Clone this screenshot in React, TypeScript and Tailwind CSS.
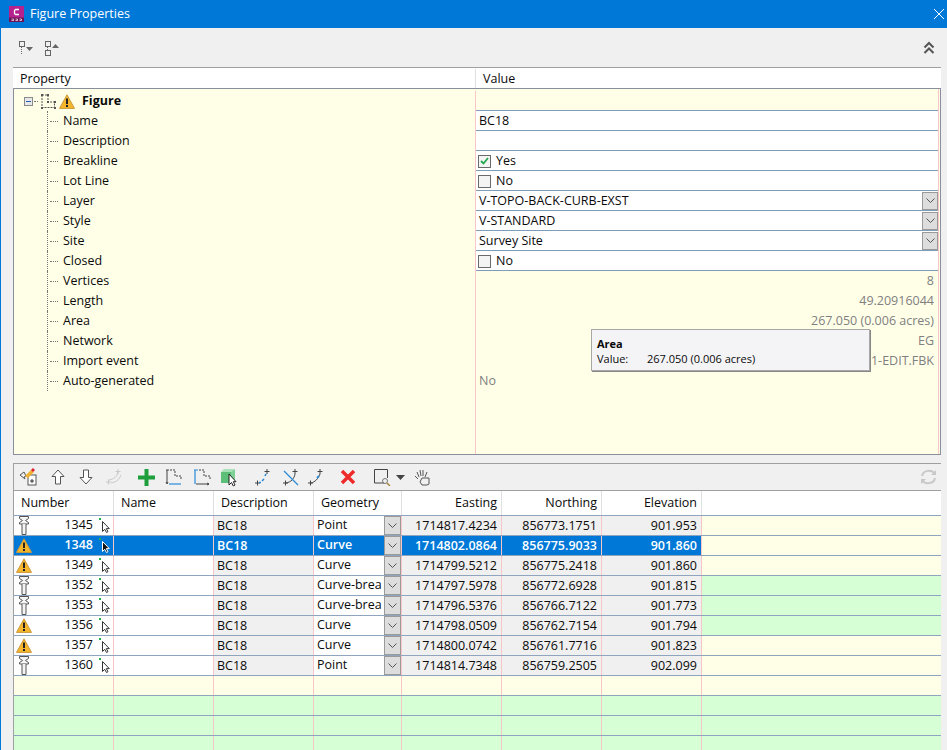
import * as React from "react";

const font = "font-['Open_Sans',sans-serif]";

function Warning({ className = "" }: { className?: string }) {
  return (
    <svg width="16" height="15" viewBox="0 0 16 15" className={className}>
      <path d="M8 .8 15.500 14.400H.5Z" fill="#f5b52c" stroke="#c99a3a" strokeWidth="1" strokeLinejoin="round" />
      <rect x="7" y="4.500" width="2" height="5.500" fill="#222" />
      <rect x="7" y="11" width="2" height="2" fill="#222" />
    </svg>
  );
}

function Pin() {
  return (
    <svg width="12" height="19" viewBox="0 0 12 19" fill="#f4f4f4" stroke="#555">
      <path d="M1.500.5h9v2l-3 2 3 2v1.500h-9V6.500l3-2-3-2Z" />
      <path d="M4 8v10.500h4V8" />
    </svg>
  );
}

function Cursor({ selected }: { selected?: boolean }) {
  return (
    <svg width="12" height="16" viewBox="0 0 12 16">
      <rect x="0" y="0" width="2" height="2" fill="#22b14c" />
      <path d="M3.500 3.500v10l2.200-2.200 1.800 3.200 1.500-.8-1.700-3.100h3Z" fill={selected ? "#111" : "#fff"} stroke={selected ? "#fff" : "#333"} strokeWidth="1" />
    </svg>
  );
}

function Caret() {
  return (
    <svg width="9" height="5" viewBox="0 0 9 5" fill="none" stroke="#555" strokeWidth="1">
      <path d="M.5.5 4.500 4.500 8.500.5" />
    </svg>
  );
}

function ComboButton({ className = "" }: { className?: string }) {
  return (
    <div className={`flex h-full shrink-0 items-center justify-center border border-[#9a9a9a] bg-[#dddddd] ${className}`}>
      <Caret />
    </div>
  );
}

function Checkbox({ checked }: { checked?: boolean }) {
  return (
    <span className="flex h-[13px] w-[13px] items-center justify-center border border-[#6a6a6a] bg-[#f4f4f4]">
      {checked && (
        <svg width="9" height="8" viewBox="0 0 9 8" fill="none" stroke="#22a94f" strokeWidth="1.800">
          <path d="M1 4 3.500 6.500 8 1" />
        </svg>
      )}
    </span>
  );
}

type Prop = { name: string; kind: "blank" | "text" | "check" | "combo" | "ro"; value?: string; checked?: boolean };

const props: Prop[] = [
  { name: "Name", kind: "text", value: "BC18" },
  { name: "Description", kind: "blank" },
  { name: "Breakline", kind: "check", value: "Yes", checked: true },
  { name: "Lot Line", kind: "check", value: "No" },
  { name: "Layer", kind: "combo", value: "V-TOPO-BACK-CURB-EXST" },
  { name: "Style", kind: "combo", value: "V-STANDARD" },
  { name: "Site", kind: "combo", value: "Survey Site" },
  { name: "Closed", kind: "check", value: "No" },
  { name: "Vertices", kind: "ro", value: "8" },
  { name: "Length", kind: "ro", value: "49.20916044" },
  { name: "Area", kind: "ro", value: "267.050 (0.006 acres)" },
  { name: "Network", kind: "ro", value: "EG" },
  { name: "Import event", kind: "ro", value: "1-EDIT.FBK" },
];

function PropValue({ p }: { p: Prop }) {
  if (p.kind === "ro") {
    return <div className="flex h-5 items-center justify-end pr-[4px] text-[#808080]">{p.value}</div>;
  }
  return (
    <div className="flex h-5 items-center border-b border-[#7f9db9] bg-white pl-[3px] pt-px">
      {p.kind === "check" && (
        <span className="-ml-[1px] flex items-center gap-[5px]">
          <Checkbox checked={p.checked} />
          {p.value}
        </span>
      )}
      {p.kind === "text" && p.value}
      {p.kind === "combo" && (
        <>
          <span className="flex-1">{p.value}</span>
          <ComboButton className="-mt-px w-4" />
        </>
      )}
    </div>
  );
}

function PropertyGrid() {
  return (
    <div className="relative ml-[12px] h-[388px] w-[928px] border-t border-[#a0a0a0]">
      <div className="flex h-5 bg-white pt-px">
        <div className="w-[463px] border-r border-[#e0e0e0] pl-[7px] leading-5">Property</div>
        <div className="flex-1 pl-[7px] leading-5">Value</div>
      </div>
      <div className="flex h-[367px] border border-[#8a8f9c] bg-[#ffffe8] pt-[2px]">
        <div className="w-[462px] shrink-0 border-r border-[#f7c6c6]">
          <div className="flex h-5 items-center pl-[10px]">
            <span className="flex h-[9px] w-[9px] items-center justify-center border border-[#8a8a8a] bg-[#e8e8e8]">
              <span className="h-px w-[5px] bg-[#2a5db0]" />
            </span>
            <span className="ml-[1px] w-[4px] border-t border-dotted border-[#777]" />
            <svg width="15" height="15" viewBox="0 0 15 15" fill="none" stroke="#555" className="ml-[3px]">
              <path strokeDasharray="2 1" d="M1 1h6v7h6.500M1 1v12.500h12.500V8" />
              <path d="M0 0h2v2H0ZM6 0h2v2H6ZM6 7h2v2H6ZM13 7h2v2h-2ZM0 13h2v2H0ZM13 13h2v2h-2Z" fill="#555" stroke="none" />
            </svg>
            <Warning className="ml-[3px]" />
            <span className="ml-[7px] font-bold">Figure</span>
          </div>
          {[...props, { name: "Auto-generated", kind: "ro" as const }].map((p) => (
            <div key={p.name} className="flex h-5 items-center pl-[33px]">
              <span className="h-5 border-l border-dotted border-[#777]" />
              <span className="ml-[2px] w-[8px] border-t border-dotted border-[#777]" />
              <span className="ml-[5px]">{p.name}</span>
            </div>
          ))}
        </div>
        <div className="mr-[1px] flex-1 -mt-[2px] border-r border-[#f7c6c6] pt-[2px]">
          <div className="h-5 border-b border-[#7f9db9]" />
          {props.map((p) => (
            <PropValue key={p.name} p={p} />
          ))}
          <div className="flex h-5 items-center pl-[3px] text-[#808080]">No</div>
        </div>
      </div>
      <div className="absolute left-[578px] top-[261px] h-[42px] w-[279px] border border-[#a8a8a8] bg-[#f4f4f6] pl-[5px] pt-[6px] text-[11px] leading-[15px] shadow-[1px_1px_0_#888]">
        <div className="font-bold">Area</div>
        <div className="flex">
          <span className="w-[50px]">Value:</span>
          <span>267.050 (0.006 acres)</span>
        </div>
      </div>
    </div>
  );
}

type Row = { num: string; warn: boolean; geo: string; e: string; n: string; z: string; tail: string; sel?: boolean };

const Y = "bg-[#ffffe8]";
const G = "bg-[#d6ffd6]";

const rows: Row[] = [
  { num: "1345", warn: false, geo: "Point", e: "1714817.4234", n: "856773.1751", z: "901.953", tail: Y },
  { num: "1348", warn: true, geo: "Curve", e: "1714802.0864", n: "856775.9033", z: "901.860", tail: Y, sel: true },
  { num: "1349", warn: true, geo: "Curve", e: "1714799.5212", n: "856775.2418", z: "901.860", tail: Y },
  { num: "1352", warn: false, geo: "Curve-break", e: "1714797.5978", n: "856772.6928", z: "901.815", tail: G },
  { num: "1353", warn: false, geo: "Curve-break", e: "1714796.5376", n: "856766.7122", z: "901.773", tail: G },
  { num: "1356", warn: true, geo: "Curve", e: "1714798.0509", n: "856762.7154", z: "901.794", tail: G },
  { num: "1357", warn: true, geo: "Curve", e: "1714800.0742", n: "856761.7716", z: "901.823", tail: Y },
  { num: "1360", warn: false, geo: "Point", e: "1714814.7348", n: "856759.2505", z: "902.099", tail: Y },
];

function DataRow({ r }: { r: Row }) {
  const plain = r.sel ? "bg-[#0078d7] text-white font-semibold" : "bg-white";
  const gray = r.sel ? "bg-[#0078d7] text-white font-semibold" : "bg-[#f0f0f0]";
  const num = `w-[100px] border-r border-[#f7c6c6] pr-[4px] text-right leading-[19px] ${gray}`;
  return (
    <div className="flex h-5 border-b border-[#8fa5bf]">
      <div className={`flex w-[100px] items-center border-r border-[#f7c6c6] pl-[1px] ${plain}`}>
        <span className="flex w-[18px] justify-center">{r.warn ? <Warning /> : <Pin />}</span>
        <span className="w-[60px] text-right">{r.num}</span>
        <span className="ml-[6px]">
          <Cursor selected={r.sel} />
        </span>
      </div>
      <div className={`w-[100px] border-r border-[#f7c6c6] ${plain}`} />
      <div className={`w-[100px] border-r border-[#f7c6c6] pl-[3px] leading-[19px] ${gray}`}>BC18</div>
      <div className={`flex w-[88px] items-center border-r border-[#f7c6c6] ${plain}`}>
        <span className="w-[68px] overflow-hidden whitespace-nowrap pl-[3px]">{r.geo}</span>
        <ComboButton className="ml-auto w-[17px]" />
      </div>
      <div className={num}>{r.e}</div>
      <div className={num}>{r.n}</div>
      <div className={num}>{r.z}</div>
      <div className={`flex-1 ${r.tail}`} />
    </div>
  );
}

function EmptyRow({ tail }: { tail: string }) {
  const widths = ["w-[100px]", "w-[100px]", "w-[100px]", "w-[88px]", "w-[100px]", "w-[100px]", "w-[100px]"];
  return (
    <div className={`flex h-5 border-b border-[#8fa5bf] ${tail}`}>
      {widths.map((w, i) => (
        <div key={i} className={`${w} border-r border-[#f7c6c6]`} />
      ))}
    </div>
  );
}

function ToolBtn({ x, children }: { x: string; children: React.ReactNode }) {
  return <span className={`flex w-[30px] shrink-0 justify-center ${x}`}>{children}</span>;
}

function GridToolbar() {
  return (
    <div className="flex h-[27px] items-center border-b border-[#a0a0a0]">
      <ToolBtn x="">
        <svg width="20" height="20" viewBox="0 0 20 20" fill="none">
          <path d="M1 8l4-3 1 2 1 2-2 1 1 2Z" stroke="#555" />
          <rect x="9" y="8" width="8" height="10" fill="#fff" stroke="#555" />
          <path d="M11 14h4M13 12v4" stroke="#333" />
          <path d="M6 9l6-6 3 2-6 6Z" fill="#f0b030" />
          <path d="M12 3l2-2 2 2-2 2Z" fill="#e02030" />
        </svg>
      </ToolBtn>
      <ToolBtn x="-ml-[1px]">
        <svg width="14" height="16" viewBox="0 0 14 16" fill="#fff" stroke="#555">
          <path d="M7 1 13 7.500H9.500V15h-5V7.500H1Z" />
        </svg>
      </ToolBtn>
      <ToolBtn x="-ml-[2px]">
        <svg width="14" height="16" viewBox="0 0 14 16" fill="#fff" stroke="#555">
          <path d="M7 15 13 8.500H9.500V1h-5V8.500H1Z" />
        </svg>
      </ToolBtn>
      <ToolBtn x="-ml-[2px]">
        <svg width="18" height="18" viewBox="0 0 18 18" fill="none" stroke="#c8c8c8">
          <path d="M1 14h5M3.500 11.500v5M13 1v5M10.500 3.500h5M4 12c5-1 8-3 9-8M6 15c5-1 8-3 10-8" />
        </svg>
      </ToolBtn>
      <ToolBtn x="ml-[2px]">
        <svg width="17" height="17" viewBox="0 0 17 17">
          <path d="M6.500 0h4v6.500H17v4h-6.500V17h-4v-6.500H0v-4h6.500Z" fill="#1f9e3c" />
        </svg>
      </ToolBtn>
      <ToolBtn x="-ml-[2px]">
        <svg width="18" height="18" viewBox="0 0 18 18" fill="none" stroke="#444">
          <path strokeDasharray="2 1" d="M5 2h5v6h6v4" />
          <path d="M2 2v13M1 2h3M1 14l1 2 1-2" />
          <path d="M4 16h12" stroke="#2a8ad8" strokeWidth="1.200" />
        </svg>
      </ToolBtn>
      <ToolBtn x="-ml-[2px]">
        <svg width="18" height="18" viewBox="0 0 18 18" fill="none" stroke="#444">
          <path strokeDasharray="2 1" d="M6 2h5v6h6v4" />
          <path d="M2 2v14" stroke="#2a8ad8" strokeWidth="1.200" />
          <path d="M1 2h4" stroke="#2a8ad8" />
          <path d="M3 16h13M14 15l2 1-2 1" />
        </svg>
      </ToolBtn>
      <ToolBtn x="-ml-[4px]">
        <svg width="20" height="20" viewBox="0 0 20 20">
          <path d="M3 5 6 2h11l-4 3Z" fill="#a8e0b8" />
          <path d="M13 5l4-3v11l-4 3Z" fill="#7fd096" />
          <path d="M3 5h10v11H3Z" fill="#5cbf78" />
          <path d="M11 7v11l2.500-2.500 1.800 3.500 1.700-1-1.700-3.300H18Z" fill="#fff" stroke="#222" />
        </svg>
      </ToolBtn>
      <ToolBtn x="ml-[5px]">
        <svg width="18" height="18" viewBox="0 0 18 18" fill="none" stroke="#444">
          <path d="M1 15h5M3.500 12.500v5M13 1v5M10.500 3.500h5" />
          <path d="M5 14.500h2" stroke="#2a8ad8" strokeWidth="1.500" />
          <path d="M8 13l2-2M11 8l1-2" stroke="#2a8ad8" strokeWidth="1.600" />
        </svg>
      </ToolBtn>
      <ToolBtn x="-ml-[2px]">
        <svg width="18" height="18" viewBox="0 0 18 18" fill="none" stroke="#444">
          <path d="M1 15h5M3.500 12.500v5M13 1v5M10.500 3.500h5M4 15c5-1 8-4 9-9" />
          <path d="M2 3l14 14" stroke="#2a8ad8" strokeWidth="1.200" />
        </svg>
      </ToolBtn>
      <ToolBtn x="-ml-[5px]">
        <svg width="18" height="18" viewBox="0 0 18 18" fill="none" stroke="#444">
          <path d="M1 15h5M3.500 12.500v5M13 1v5M10.500 3.500h5M4 15c4-1 7-4 9-9" />
          <path d="M10 10l2-2" stroke="#2a8ad8" strokeWidth="1.800" />
        </svg>
      </ToolBtn>
      <ToolBtn x="ml-[2px]">
        <svg width="16" height="16" viewBox="0 0 16 16" stroke="#ee2b2b" strokeWidth="3.500">
          <path d="M2 2l12 12M14 2 2 14" />
        </svg>
      </ToolBtn>
      <span className="ml-[3px] flex w-[34px] shrink-0 items-center justify-center">
        <svg width="20" height="18" viewBox="0 0 20 18" fill="none">
          <path d="M11 15H1.500V1.500h13V10" stroke="#444" />
          <circle cx="12" cy="13" r="2.500" stroke="#777" />
          <path d="M14 15l3 3" stroke="#a8873c" strokeWidth="1.500" />
        </svg>
      </span>
      <svg width="9" height="5" viewBox="0 0 9 5" className="-ml-[4px]">
        <path d="M0 0h9L4.500 5Z" fill="#444" />
      </svg>
      <span className="ml-[9px]">
        <svg width="17" height="18" viewBox="0 0 17 18" fill="none" stroke="#555">
          <path d="M4 11 1 8M5 9 3 4M7 8 6 2M9 8V2M11 9l2-5M8 10h7v6l-2 1H8l-2-3Z" />
        </svg>
      </span>
      <span className="ml-auto mr-[4px]">
        <svg width="17" height="16" viewBox="0 0 17 16" fill="none" stroke="#c8c8c8" strokeWidth="2">
          <path d="M2 7c1-6 10-7 13-2M15 9c-1 6-10 7-13 2" />
          <path d="M16 1v5h-5ZM1 15v-5h5Z" fill="#c8c8c8" stroke="none" />
        </svg>
      </span>
    </div>
  );
}

function DataGrid() {
  const head: [string, string, string][] = [
    ["Number", "w-[100px]", "pl-[7px]"],
    ["Name", "w-[100px]", "pl-[7px]"],
    ["Description", "w-[100px]", "pl-[7px]"],
    ["Geometry", "w-[88px]", "pl-[7px]"],
    ["Easting", "w-[100px]", "justify-end pr-[4px]"],
    ["Northing", "w-[100px]", "justify-end pr-[4px]"],
    ["Elevation", "w-[100px]", "justify-end pr-[4px]"],
  ];
  return (
    <div className="ml-[12px] mt-[8px] w-[928px] border-l border-t border-[#a0a0a0]">
      <GridToolbar />
      <div className="flex h-[25px] border-b border-[#8fa5bf] bg-white">
        {head.map(([t, w, x]) => (
          <div key={t} className={`flex items-center border-r border-[#e0e0e0] ${w} ${x}`}>
            {t}
          </div>
        ))}
      </div>
      {rows.map((r) => (
        <DataRow key={r.num} r={r} />
      ))}
      <EmptyRow tail={Y} />
      <EmptyRow tail={G} />
      <EmptyRow tail={G} />
      <EmptyRow tail={G} />
    </div>
  );
}

export default function App() {
  return (
    <div className={`${font} h-[750px] w-[947px] overflow-hidden border-l border-[#0078d7] bg-[#f0f0f0] text-[12.5px] text-[#0a0a0a]`}>
      <div className="-ml-[1px] flex h-[28px] items-center bg-[#0078d7] pl-[9px] text-[12.5px] text-white">
        <svg width="15" height="16" viewBox="0 0 15 16" className="shrink-0">
          <rect width="15" height="16" fill="#b5228e" />
          <rect y="11.500" width="15" height="4.500" fill="#6e1258" />
          <path d="M10 3.500H6.500L5.500 4.500v3l1 1H10" fill="none" stroke="#fff" strokeWidth="1.300" />
          <path d="M2.500 13h2v1.500h-2M6.500 13h2v1.500h-2M10.500 13h2v1.500h-2" fill="none" stroke="#fff" strokeWidth=".7" />
        </svg>
        <span className="ml-[6px]">Figure Properties</span>
        <svg width="12" height="12" viewBox="0 0 12 12" stroke="#fff" strokeWidth="1" className="ml-auto mr-[2px]">
          <path d="M1 1l10 10M11 1 1 11" />
        </svg>
      </div>
      <div className="flex h-[39px] items-center pl-[17px]">
        <svg width="16" height="16" viewBox="0 0 16 16" fill="none" stroke="#666">
          <rect x="1.500" y="1.500" width="5" height="5" />
          <path d="M3.500 7v8" strokeDasharray="1 1" />
          <path d="M8 7h7l-3.500 4Z" fill="#666" stroke="none" />
        </svg>
        <svg width="16" height="16" viewBox="0 0 16 16" fill="none" stroke="#666" className="ml-[10px]">
          <rect x="1.500" y="1.500" width="5" height="5" />
          <rect x="1.500" y="10.500" width="5" height="5" />
          <path d="M3.500 7v3" strokeDasharray="1 1" />
          <path d="M8 8h7l-3.500-4Z" fill="#666" stroke="none" />
        </svg>
        <svg width="12" height="14" viewBox="0 0 12 14" fill="none" stroke="#555" strokeWidth="2" className="ml-auto mr-[12px]">
          <path d="M1.500 6.500 6 2l4.500 4.500M1.500 12 6 7.500l4.500 4.500" />
        </svg>
      </div>
      <PropertyGrid />
      <DataGrid />
    </div>
  );
}
